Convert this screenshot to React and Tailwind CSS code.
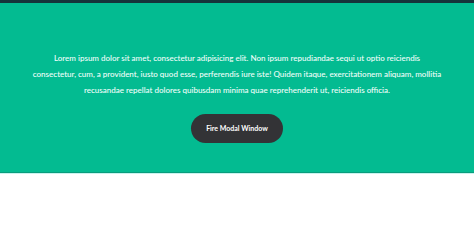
export default function App() {
  return (
    <div className="w-[474px] h-[232px] bg-white" style={{ fontFamily: 'Lato, "Open Sans", sans-serif' }}>
      <div className="h-[3px] bg-[#15333a]" />
      <div className="h-[170px] bg-[#03bb91] border-b border-[#0a9c7c] flex flex-col items-center pt-[47px]">
        <p className="text-[#f2fffb] text-[8px] leading-[16px] text-center whitespace-nowrap font-medium">
          Lorem ipsum dolor sit amet, consectetur adipisicing elit. Non ipsum repudiandae sequi ut optio reiciendis
          <br />
          consectetur, cum, a provident, iusto quod esse, perferendis iure iste! Quidem itaque, exercitationem aliquam, mollitia
          <br />
          recusandae repellat dolores quibusdam minima quae reprehenderit ut, reiciendis officia.
        </p>
        <button className="mt-[16px] w-[92px] h-[29px] rounded-full bg-[#333336] text-white text-[7px] font-bold">
          Fire Modal Window
        </button>
      </div>
      <div className="h-[1px] bg-[#c9f3ee]" />
    </div>
  );
}
